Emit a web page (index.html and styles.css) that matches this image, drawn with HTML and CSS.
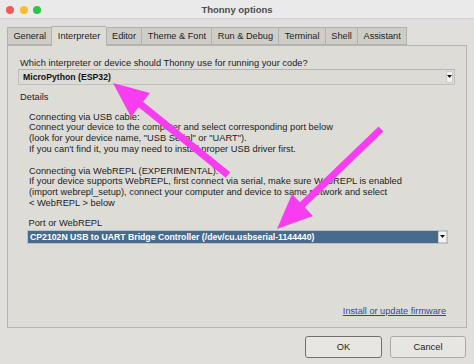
FILE: index.html
```html
<!DOCTYPE html>
<html>
<head>
<meta charset="utf-8">
<title>Thonny options</title>
<link rel="stylesheet" href="styles.css">
</head>
<body>
<div class="window">
  <div class="titlebar">
    <div class="lights">
      <span class="light red"></span>
      <span class="light yellow"></span>
      <span class="light green"></span>
    </div>
    <div class="title">Thonny options</div>
    <div></div>
  </div>
  <div class="main">
    <div class="tabs">
      <div class="tab">General</div>
      <div class="tab active">Interpreter</div>
      <div class="tab">Editor</div>
      <div class="tab">Theme &amp; Font</div>
      <div class="tab">Run &amp; Debug</div>
      <div class="tab">Terminal</div>
      <div class="tab">Shell</div>
      <div class="tab last">Assistant</div>
    </div>
    <div class="panel">
      <div class="label q">Which interpreter or device should Thonny use for running your code?</div>
      <div class="combo">
        <span class="combo-text">MicroPython (ESP32)</span>
        <span class="combo-btn"><svg width="5" height="3" viewBox="0 0 5 3"><path d="M0 0H5L2.5 3Z" fill="#111"/></svg></span>
      </div>
      <div class="label details-h">Details</div>
      <div class="details">Connecting via USB cable:<br>Connect your device to the computer and select corresponding port below<br>(look for your device name, "USB Serial" or "UART").<br>If you can't find it, you may need to install proper USB driver first.<br>&nbsp;<br>Connecting via WebREPL (EXPERIMENTAL):<br>If your device supports WebREPL, first connect via serial, make sure WebREPL is enabled<br>(import webrepl_setup), connect your computer and device to same network and select<br>&lt; WebREPL &gt; below</div>
      <div class="label port">Port or WebREPL</div>
      <div class="combo selected">
        <span class="combo-text">CP2102N USB to UART Bridge Controller (/dev/cu.usbserial-1144440)</span>
        <span class="combo-btn"><svg width="5" height="3" viewBox="0 0 5 3"><path d="M0 0H5L2.5 3Z" fill="#111"/></svg></span>
      </div>
      <div class="spacer"></div>
      <div class="link-row"><a class="link" href="#">Install or update firmware</a></div>
    </div>
    <div class="buttons">
      <button class="btn default">OK</button>
      <button class="btn cancel">Cancel</button>
    </div>
  </div>
  <svg class="arrows" width="474" height="364" viewBox="0 0 474 364">
    <line x1="228" y1="175" x2="139" y2="103" stroke="#f83df0" stroke-width="7"/>
    <polygon points="113,83 150,93 131,117" fill="#f83df0"/>
    <line x1="381" y1="129" x2="300" y2="207" stroke="#f83df0" stroke-width="7"/>
    <polygon points="277,229 313,216 292,194" fill="#f83df0"/>
  </svg>
</div>
</body>
</html>
```
FILE: styles.css
```css
* {
  box-sizing: border-box;
  margin: 0;
  padding: 0;
}

html, body {
  width: 474px;
  height: 364px;
  overflow: hidden;
}

body {
  font-family: "Liberation Sans", Arial, sans-serif;
  font-size: 9.3px;
  color: #1c1c1c;
  background: #e2e1dd;
}

.window {
  position: relative;
  width: 474px;
  height: 364px;
  display: flex;
  flex-direction: column;
  background: #e0dfdb;
}

.titlebar {
  height: 19px;
  flex: none;
  display: grid;
  grid-template-columns: 1fr auto 1fr;
  align-items: center;
  background: #eaeaea;
  border-bottom: 1px solid #d2d2d2;
  padding-top: 1px;
}

.lights {
  display: flex;
  gap: 5.5px;
  padding-left: 6px;
  align-items: center;
}

.light {
  width: 8px;
  height: 8px;
  border-radius: 50%;
}

.red { background: #f05b55; }
.yellow { background: #f6bd31; }
.green { background: #2ec444; }

.title {
  font-weight: bold;
  font-size: 9.5px;
  color: #4d4d4d;
}

.main {
  flex: 1;
  display: flex;
  flex-direction: column;
  padding: 7px 7px 0 7px;
}

.tabs {
  display: flex;
  align-items: flex-end;
  height: 19px;
  position: relative;
  z-index: 1;
}

.tab {
  height: 18px;
  display: flex;
  align-items: center;
  padding: 0 5.4px;
  font-size: 9.2px;
  color: #222;
  background: #cfcdc8;
  border-left: 1px solid #b2b1ac;
  border-top: 1px solid #b2b1ac;
  border-bottom: 1px solid #b2b1ac;
}

.tab.last {
  border-right: 1px solid #b2b1ac;
}

.tab.active {
  height: 20px;
  margin-bottom: -1px;
  background: #dddcd7;
  border-bottom: none;
  padding-bottom: 1px;
}

.panel {
  flex: none;
  height: 283px;
  display: flex;
  flex-direction: column;
  background: #dddcd7;
  border: 1px solid #b5b4af;
  padding: 11.5px 11px 10.6px 10px;
}

.label,
.details {
  line-height: 10.8px;
}

.q,
.details-h {
  padding-left: 2px;
}

.combo {
  display: flex;
  align-items: center;
  height: 16px;
  margin-top: 0.7px;
  border: 1px solid #c1c0bb;
  border-top-color: #b5b4af;
  background: #dcdbd6;
  padding: 0 1px 0 4px;
}

.combo-text {
  flex: 1;
  font-weight: bold;
  font-size: 8.7px;
  color: #111;
  white-space: nowrap;
}

.combo-btn {
  width: 7px;
  height: 12px;
  display: flex;
  align-items: center;
  justify-content: center;
  background: #f3f3f3;
  border: 1px solid #c9c9c9;
  border-radius: 2px;
}

.details-h {
  margin-top: 6.6px;
}

.details {
  margin-top: 9.2px;
  margin-left: 11px;
  white-space: nowrap;
}

.port {
  margin-top: 8.8px;
  margin-left: 10.5px;
}

.combo.selected {
  height: 14px;
  margin-top: 1.6px;
  margin-left: 9px;
  margin-right: 7px;
  padding: 0 0 0 2px;
  background: #4a6a8b;
  border: 1px solid #b8c0c8;
}

.combo.selected .combo-text {
  color: #ffffff;
}

.combo.selected .combo-btn {
  width: 9px;
  height: 12px;
  border-radius: 1px;
  border-color: #cfcfcf;
}

.spacer {
  flex: 1;
}

.link-row {
  text-align: right;
  line-height: 10.8px;
  padding-right: 9px;
}

.link {
  font-size: 9.2px;
  color: #3a3f9e;
  text-decoration: underline;
}

.buttons {
  display: flex;
  justify-content: flex-end;
  gap: 8px;
  margin-top: 8px;
  margin-right: 1px;
}

.btn {
  height: 22px;
  font-family: "Liberation Sans", Arial, sans-serif;
  font-size: 9.3px;
  color: #1c1c1c;
  background: #e7e6e2;
  border: 1px solid #acaba7;
  border-radius: 3px;
}

.btn.default {
  width: 77px;
  border: 1.5px solid #727170;
}

.btn.cancel {
  width: 76px;
}

.arrows {
  position: absolute;
  top: 0;
  left: 0;
  pointer-events: none;
}
```
